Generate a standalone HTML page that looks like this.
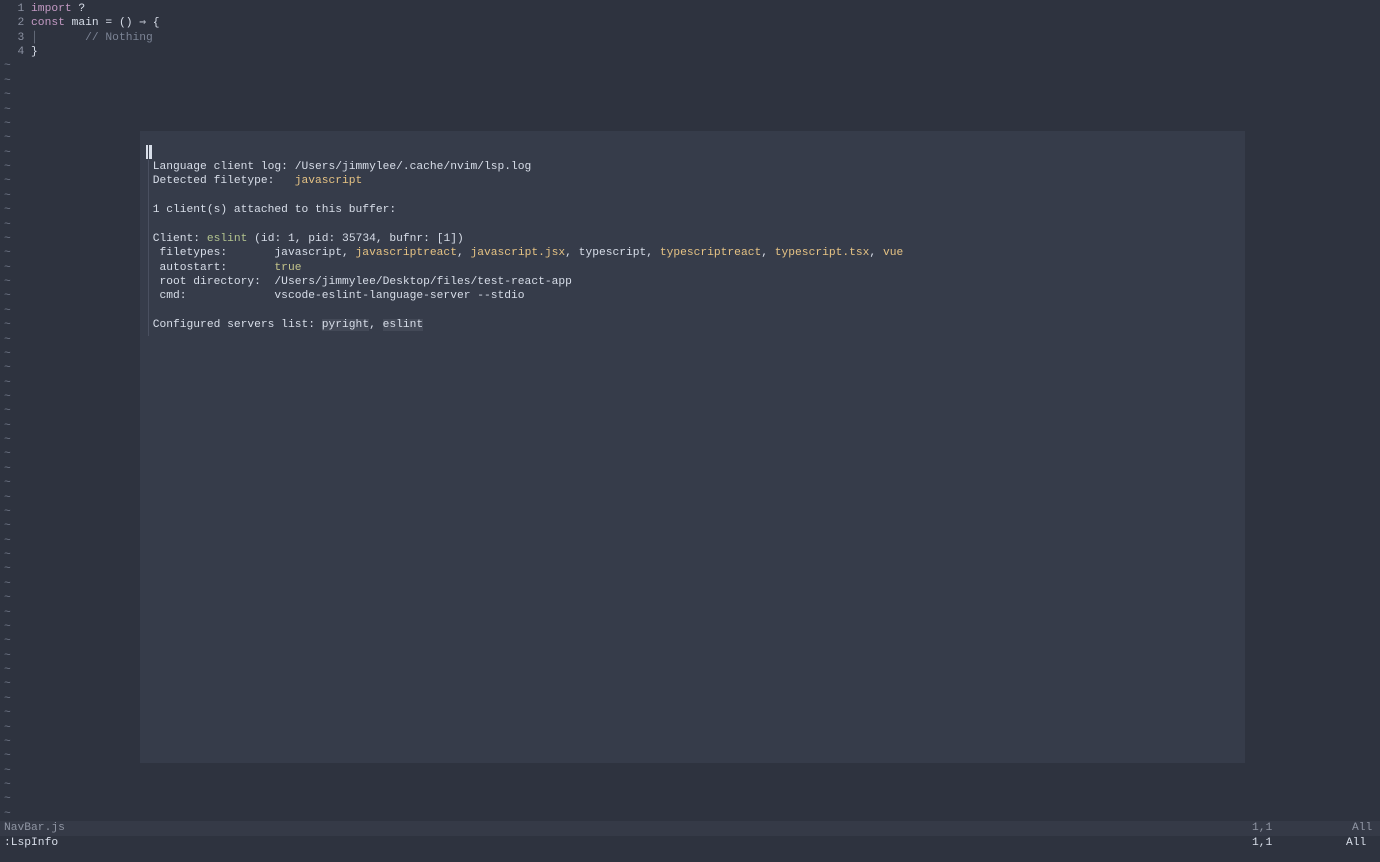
<!DOCTYPE html>
<html><head><meta charset="utf-8"><style>
html,body{margin:0;padding:0;width:1380px;height:862px;overflow:hidden;background:#2e333f;}
.r{position:absolute;left:4px;height:14.37px;line-height:14.37px;font-family:"Liberation Mono",monospace;font-size:11.27px;white-space:pre;color:#d8dee9;}
.ln{color:#8a90a0}.kw{color:#c49ac4}.cm{color:#7b8394}.ti{color:#6f7686}
.y{color:#e6c384}.g{color:#b3c48f}.t{color:#c4c48b}.hl{background:#434957}
#float{position:absolute;left:140px;top:131px;width:1105px;height:632px;background:#363c4a;}
#guide{position:absolute;left:148px;top:160px;width:1px;height:176px;background:#4a5060;}
#status{position:absolute;left:0;top:821px;width:1380px;height:15px;background:#353a47;}
#cur{position:absolute;left:146px;top:145px;width:6px;height:14px;background:#d8dee9;}
#cur:after{content:"";position:absolute;left:2px;top:0;width:1px;height:14px;background:#363c4a;}
</style></head><body>
<div id="float"></div>
<div id="status"></div>
<div id="guide"></div>
<div id="cur"></div>
<div id="rows"></div>
<div class="r" style="top:2px"><span class="ln">  1 </span><span class="kw">import</span> ?</div>
<div class="r" style="top:16.4px"><span class="ln">  2 </span><span class="kw">const</span> main = () ⇒ {</div>
<div class="r" style="top:30.7px"><span class="ln">  3 </span><span class="ti">│</span>       <span class="cm">// Nothing</span></div>
<div class="r" style="top:45.1px"><span class="ln">  4 </span>}</div>
<script>
var s='';for(var i=4;i<=56;i++){s+='<div class="r ti" style="top:'+(2+i*14.37)+'px">~</div>';}
document.getElementById('rows').innerHTML=s;
</script>
<div class="r" style="top:160.1px">                      Language client log: /Users/jimmylee/.cache/nvim/lsp.log</div>
<div class="r" style="top:174.4px">                      Detected filetype:   <span class="y">javascript</span></div>
<div class="r" style="top:203.2px">                      1 client(s) attached to this buffer:</div>
<div class="r" style="top:231.9px">                      Client: <span class="g">eslint</span> (id: 1, pid: 35734, bufnr: [1])</div>
<div class="r" style="top:246.3px">                       filetypes:       javascript, <span class="y">javascriptreact</span>, <span class="y">javascript.jsx</span>, typescript, <span class="y">typescriptreact</span>, <span class="y">typescript.tsx</span>, <span class="y">vue</span></div>
<div class="r" style="top:260.7px">                       autostart:       <span class="t">true</span></div>
<div class="r" style="top:275px">                       root directory:  /Users/jimmylee/Desktop/files/test-react-app</div>
<div class="r" style="top:289.4px">                       cmd:             vscode-eslint-language-server --stdio</div>
<div class="r" style="top:318.1px">                      Configured servers list: <span class="hl">pyright</span>, <span class="hl">eslint</span></div>
<div class="r" style="top:821.1px;color:#8f95a3">NavBar.js</div>
<div class="r" style="top:821.1px;left:1252px;color:#8f95a3">1,1</div>
<div class="r" style="top:821.1px;left:1352px;color:#8f95a3">All</div>
<div class="r" style="top:835.5px">:LspInfo</div>
<div class="r" style="top:835.5px;left:1252px">1,1</div>
<div class="r" style="top:835.5px;left:1346px">All</div>
</body></html>
